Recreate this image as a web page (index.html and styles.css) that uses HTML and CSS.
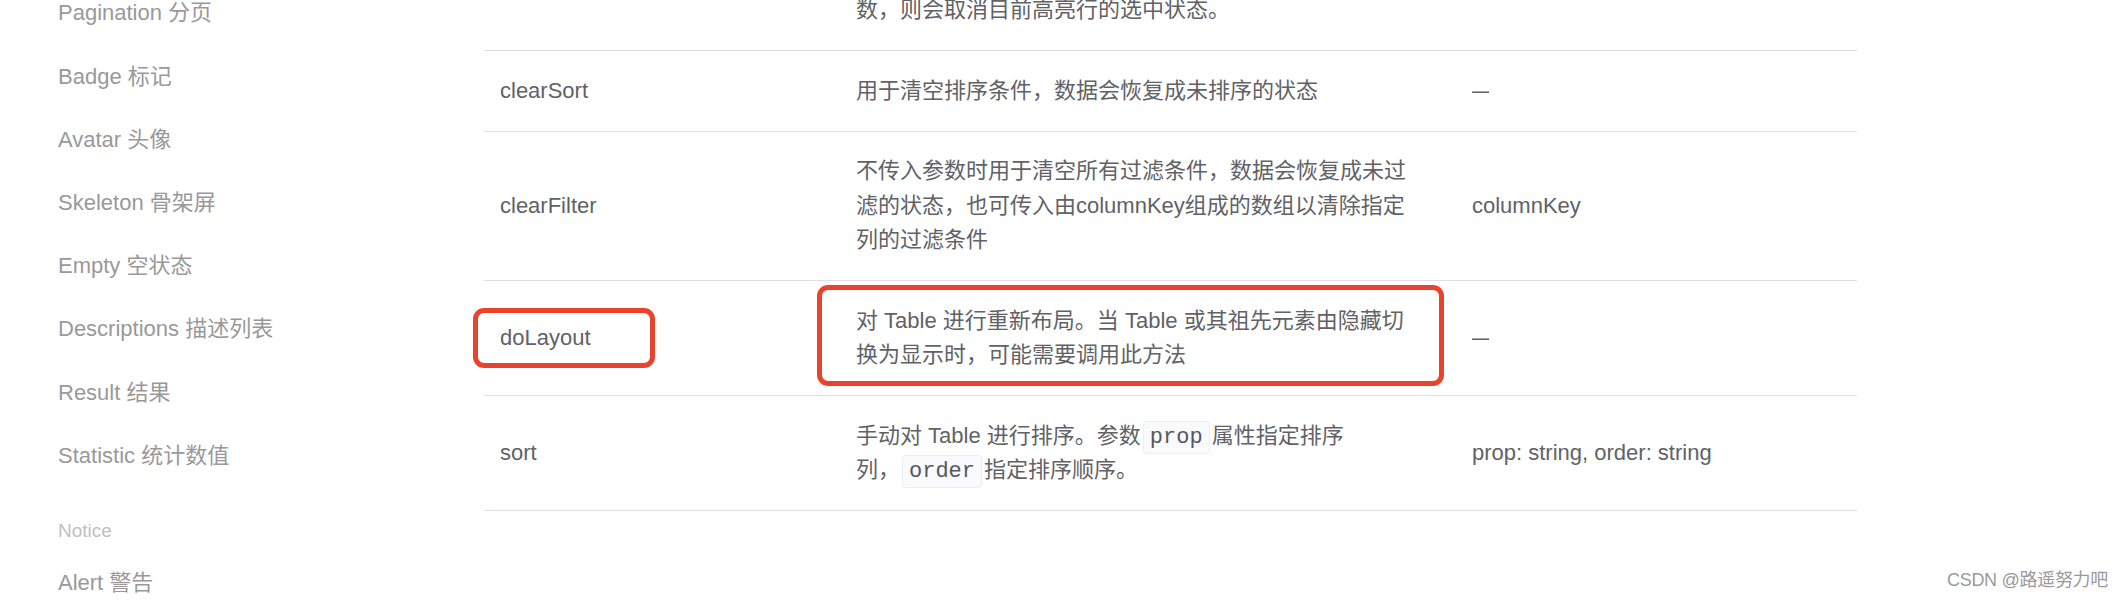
FILE: index.html
```html
<!DOCTYPE html>
<html lang="zh-CN">
<head>
<meta charset="utf-8">
<title>Table Methods</title>
<link rel="stylesheet" href="styles.css">
</head>
<body>
<div class="page">
  <nav class="sidebar">
    <ul class="nav-list">
      <li class="nav-item">Pagination 分页</li>
      <li class="nav-item">Badge 标记</li>
      <li class="nav-item">Avatar 头像</li>
      <li class="nav-item">Skeleton 骨架屏</li>
      <li class="nav-item">Empty 空状态</li>
      <li class="nav-item">Descriptions 描述列表</li>
      <li class="nav-item">Result 结果</li>
      <li class="nav-item">Statistic 统计数值</li>
    </ul>
    <div class="nav-group-title">Notice</div>
    <ul class="nav-list">
      <li class="nav-item">Alert 警告</li>
    </ul>
  </nav>
  <main class="content">
    <table class="api-table">
      <colgroup>
        <col class="col-name">
        <col class="col-desc">
        <col class="col-params">
      </colgroup>
      <tbody>
        <tr>
          <td>setCurrentRow</td>
          <td>用于单选表格，设定某一行为选中行，如果调用时不加参<br>数，则会取消目前高亮行的选中状态。</td>
          <td>row</td>
        </tr>
        <tr>
          <td>clearSort</td>
          <td>用于清空排序条件，数据会恢复成未排序的状态</td>
          <td><span class="dash">—</span></td>
        </tr>
        <tr>
          <td>clearFilter</td>
          <td>不传入参数时用于清空所有过滤条件，数据会恢复成未过<br>滤的状态，也可传入由columnKey组成的数组以清除指定<br>列的过滤条件</td>
          <td>columnKey</td>
        </tr>
        <tr>
          <td class="marked">doLayout<span class="mark mark-name"></span></td>
          <td class="marked">对 Table 进行重新布局。当 Table 或其祖先元素由隐藏切<br>换为显示时，可能需要调用此方法<span class="mark mark-desc"></span></td>
          <td><span class="dash">—</span></td>
        </tr>
        <tr>
          <td>sort</td>
          <td>手动对 Table 进行排序。参数<code class="code">prop</code>属性指定排序<br>列，<code class="code">order</code>指定排序顺序。</td>
          <td>prop: string, order: string</td>
        </tr>
      </tbody>
    </table>
  </main>
</div>
<div class="watermark">CSDN @路遥努力吧</div>
</body>
</html>
```

FILE: styles.css
```css
html, body {
  margin: 0;
  padding: 0;
  background: #ffffff;
}

body {
  width: 2124px;
  height: 600px;
  overflow: hidden;
  position: relative;
  font-family: "Liberation Sans", "Noto Sans CJK SC", sans-serif;
}

.page {
  display: flex;
  align-items: flex-start;
}

.sidebar {
  width: 484px;
  flex: none;
  box-sizing: border-box;
  padding-left: 58px;
  margin-top: -18.6px;
}

.nav-list {
  list-style: none;
  margin: 0;
  padding: 0;
}

.nav-item {
  font-size: 22px;
  line-height: 63.2px;
  color: #999999;
  white-space: nowrap;
}

.nav-group-title {
  padding-top: 24px;
  font-size: 19px;
  line-height: 40px;
  color: #c0c0c0;
}

.content {
  width: 1373px;
  flex: none;
  margin-top: -64px;
}

.api-table {
  width: 1373px;
  border-collapse: collapse;
  table-layout: fixed;
}

.col-name { width: 356px; }
.col-desc { width: 616px; }
.col-params { width: 401px; }

.api-table td {
  height: 34.5px;
  padding: 22.5px 16px;
  border-bottom: 1px solid #dfdfe6;
  font-size: 22px;
  line-height: 34.5px;
  color: #606266;
  vertical-align: middle;
  white-space: nowrap;
}

.api-table td.marked {
  position: relative;
}

.dash {
  display: inline-block;
  width: 17px;
  overflow: hidden;
  vertical-align: top;
}

.code {
  font-family: "Liberation Mono", "DejaVu Sans Mono", monospace;
  font-size: 22px;
  line-height: 20px;
  color: #55575c;
  background: #f9fafc;
  border: 1px solid #eaeefb;
  border-radius: 4px;
  padding: 3px 6px;
  margin: 0 2px;
}

.mark {
  position: absolute;
  box-sizing: border-box;
  border: 5px solid #e9432b;
  border-radius: 11px;
  pointer-events: none;
}

.mark-name {
  left: -11px;
  top: 27px;
  width: 182px;
  height: 60px;
}

.mark-desc {
  left: -23px;
  top: 4px;
  width: 627px;
  height: 101px;
}

.watermark {
  position: absolute;
  right: 16px;
  bottom: 8px;
  font-size: 18px;
  line-height: 24px;
  color: #9a9a9a;
  letter-spacing: -0.3px;
  text-shadow: 0 0 1px #ffffff;
  white-space: nowrap;
}
```
